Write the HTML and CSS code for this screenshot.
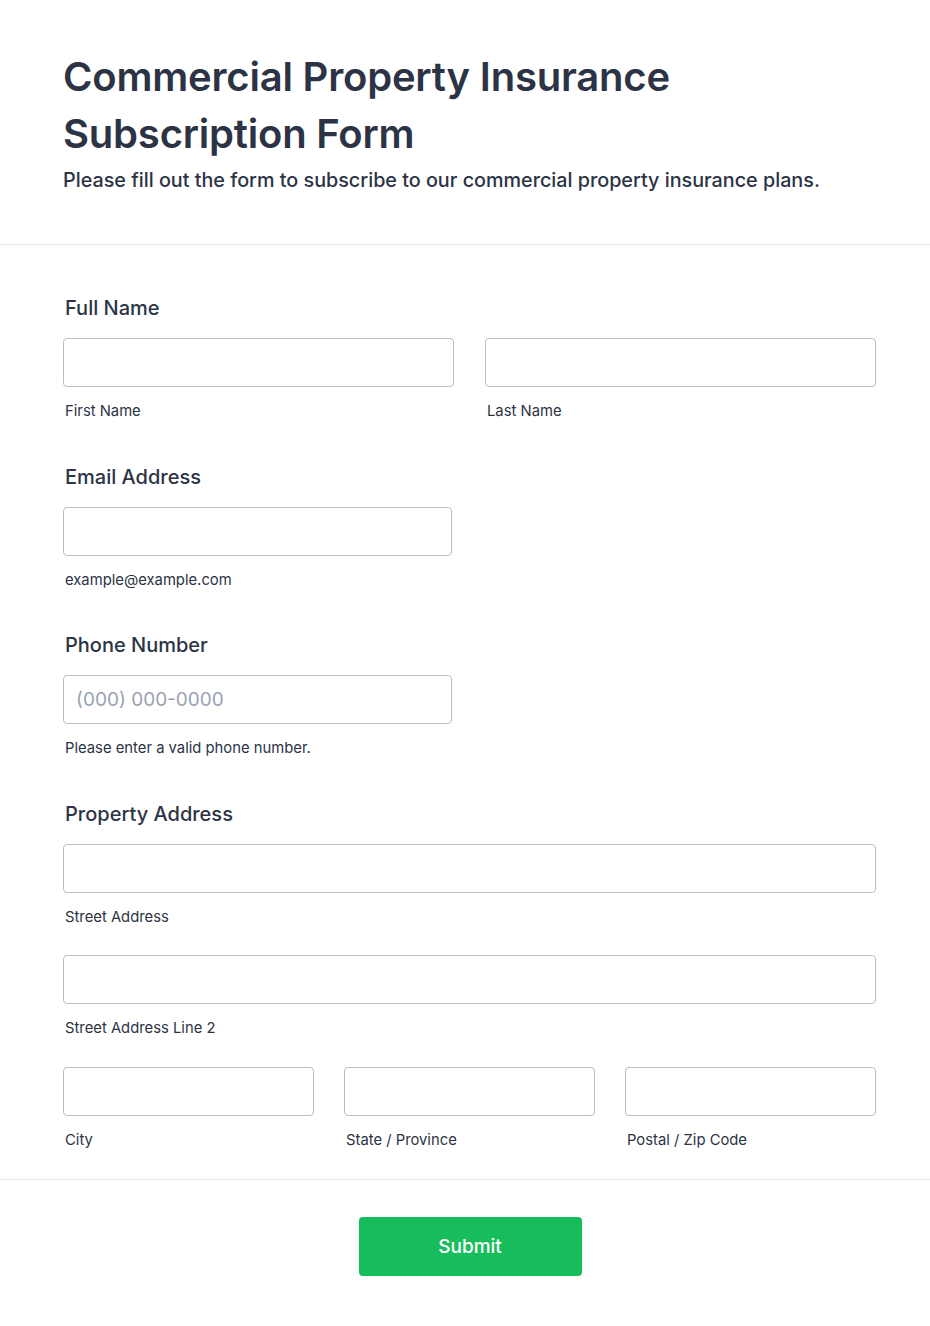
FILE: index.html
```html
<!DOCTYPE html>
<html lang="en">
<head>
  <meta charset="UTF-8" />
  <meta name="viewport" content="width=device-width, initial-scale=1.0" />
  <title>Commercial Property Insurance Subscription Form</title>
  <link rel="stylesheet" href="styles.css">
</head>
<body>
  <div class="form-header">
    <h1>Commercial Property Insurance Subscription Form</h1>
    <p class="subheader">Please fill out the form to subscribe to our commercial property insurance plans.</p>
  </div>

  <form class="form-body">
    <div class="field">
      <label class="field-label">Full Name</label>
      <div class="row two">
        <div class="sub">
          <input type="text" class="input">
          <span class="sublabel">First Name</span>
        </div>
        <div class="sub">
          <input type="text" class="input">
          <span class="sublabel">Last Name</span>
        </div>
      </div>
    </div>

    <div class="field">
      <label class="field-label">Email Address</label>
      <div class="sub half">
        <input type="email" class="input">
        <span class="sublabel">example@example.com</span>
      </div>
    </div>

    <div class="field">
      <label class="field-label">Phone Number</label>
      <div class="sub half">
        <input type="tel" class="input" placeholder="(000) 000-0000">
        <span class="sublabel">Please enter a valid phone number.</span>
      </div>
    </div>

    <div class="field">
      <label class="field-label">Property Address</label>
      <div class="sub">
        <input type="text" class="input">
        <span class="sublabel">Street Address</span>
      </div>
      <div class="sub">
        <input type="text" class="input">
        <span class="sublabel">Street Address Line 2</span>
      </div>
      <div class="row three">
        <div class="sub">
          <input type="text" class="input">
          <span class="sublabel">City</span>
        </div>
        <div class="sub">
          <input type="text" class="input">
          <span class="sublabel">State / Province</span>
        </div>
        <div class="sub">
          <input type="text" class="input">
          <span class="sublabel">Postal / Zip Code</span>
        </div>
      </div>
    </div>
  </form>

  <div class="form-footer">
    <button type="button" class="submit">Submit</button>
  </div>
</body>
</html>
```

FILE: styles.css
```css
body {
  margin: 0;
  background: #fff;
  font-family: Inter, "Noto Sans", sans-serif;
  color: #2c3345;
}

.form-header {
  padding: 48px 63px 51px;
  border-bottom: 1px solid #e3e5eb;
}

.form-header h1 {
  margin: 0;
  font-size: 40px;
  line-height: 57px;
  font-weight: 600;
  letter-spacing: -0.2px;
}

.subheader {
  margin: 5px 0 0;
  font-size: 19.75px;
  line-height: 26px;
  font-weight: 500;
}

.form-body {
  padding: 51px 54px 30px 63px;
  border-bottom: 1px solid #e3e5eb;
}

.field {
  display: flex;
  flex-direction: column;
  margin-bottom: 44.5px;
}

.field:last-child {
  margin-bottom: 0;
}

.field-label {
  font-size: 20px;
  line-height: 24px;
  font-weight: 500;
  margin: 0 0 18px 2px;
}

.row {
  display: grid;
  gap: 31px;
}

.row.two {
  grid-template-columns: 1fr 1fr;
}

.row.three {
  grid-template-columns: 1fr 1fr 1fr;
  gap: 30px;
}

.sub {
  display: flex;
  flex-direction: column;
  margin-bottom: 29.5px;
}

.row .sub,
.field > .sub.half {
  margin-bottom: 0;
}

.sub.half {
  width: 389px;
}

.input {
  box-sizing: border-box;
  height: 49px;
  width: 100%;
  border: 1px solid #b8bdc9;
  border-radius: 4px;
  padding: 0 12px;
  font-family: inherit;
  font-size: 19px;
  color: #2c3345;
  background: #fff;
}

.input::placeholder {
  color: #9aa2b1;
}

.sublabel {
  margin: 15px 0 0 2px;
  font-size: 14.8px;
  line-height: 18px;
  color: #2c3345;
}

.form-footer {
  display: flex;
  justify-content: center;
  padding: 37px 0 50px;
}

.submit {
  width: 223px;
  height: 59px;
  margin-left: 10px;
  border: none;
  border-radius: 4px;
  background: #18bd5b;
  color: #fff;
  font-family: inherit;
  font-size: 19px;
  font-weight: 500;
}
```
